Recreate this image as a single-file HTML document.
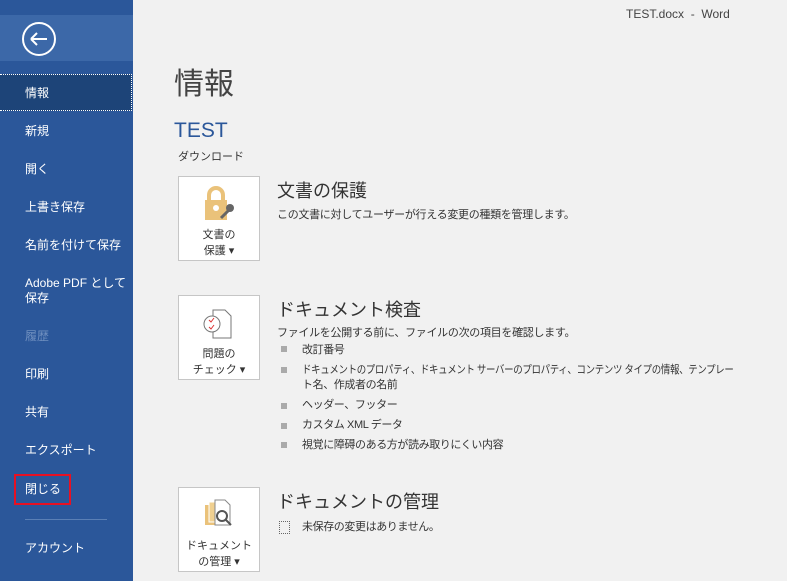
<!DOCTYPE html><html><head><meta charset="utf-8"><style>
body{margin:0;width:787px;height:581px;overflow:hidden;background:#f1f1f1;font-family:"Liberation Sans","Noto Sans CJK JP",sans-serif;position:relative}
.sb{position:absolute;left:0;top:0;width:133px;height:581px;background:#2b579a}
.band{position:absolute;left:0;top:15px;width:133px;height:46px;background:#3c68a8}
.it{position:absolute;left:25px;color:#fff;font-size:12px;line-height:15px}
.act{position:absolute;left:0;top:74px;width:132px;height:37px;background:#1d4478;border:1px dotted #fff;border-left:none;box-sizing:border-box}
.a{position:absolute;color:#444;font-size:12px}
.box{position:absolute;left:178px;width:82px;height:85px;border:1px solid #c6c6c6;background:#fff;box-sizing:border-box;text-align:center;font-size:11px;color:#333;line-height:16px}
.h{position:absolute;left:277px;font-size:18px;color:#333}
.t{position:absolute;left:277px;font-size:11px;color:#333;white-space:nowrap;letter-spacing:-0.3px}
.b{position:absolute;left:302px;font-size:11px;color:#333;line-height:15px;white-space:nowrap;letter-spacing:-0.4px}
.sq{position:absolute;left:281px;width:6px;height:6px;background:#aaa}
</style></head><body>
<div class="sb"></div><div class="band"></div>
<svg style="position:absolute;left:21px;top:21px" width="36" height="36"><circle cx="18" cy="18" r="16" fill="none" stroke="#fff" stroke-width="2"/><path d="M10 18H26M10 18L16 12M10 18L16 24" stroke="#fff" stroke-width="2" fill="none"/></svg>
<div class="act"></div>
<div class="it" style="top:86px">情報</div>
<div class="it" style="top:124px">新規</div>
<div class="it" style="top:162px">開く</div>
<div class="it" style="top:200px">上書き保存</div>
<div class="it" style="top:238px">名前を付けて保存</div>
<div class="it" style="top:276px">Adobe PDF として<br>保存</div>
<div class="it" style="top:329px;color:#6f8fbf">履歴</div>
<div class="it" style="top:367px">印刷</div>
<div class="it" style="top:405px">共有</div>
<div class="it" style="top:443px">エクスポート</div>
<div style="position:absolute;left:14px;top:474px;width:57px;height:31px;border:2px solid #e81123;box-sizing:border-box"></div>
<div class="it" style="top:482px">閉じる</div>
<div style="position:absolute;left:25px;top:519px;width:82px;height:1px;background:#5a7fb5"></div>
<div class="it" style="top:541px">アカウント</div>
<div class="a" style="left:626px;top:7px">TEST.docx &nbsp;- &nbsp;Word</div>
<div style="position:absolute;left:174px;top:59px;font-size:30px;color:#444">情報</div>
<div style="position:absolute;left:174px;top:119px;font-size:21px;color:#2b579a">TEST</div>
<div style="position:absolute;left:178px;top:148px;font-size:11px;color:#333">ダウンロード</div>
<div class="box" style="top:176px"><svg width="40" height="36" style="margin-top:9px"><rect x="6" y="14" width="22" height="20" fill="#eac27a"/><path d="M10 14V9a7 7 0 0114 0v5" fill="none" stroke="#eac27a" stroke-width="4"/><circle cx="17" cy="22" r="3" fill="#fff"/><path d="M22 32l8-8" stroke="#666" stroke-width="3"/><circle cx="31" cy="22" r="4" fill="#666"/></svg><div>文書の<br>保護 ▾</div></div>
<div class="h" style="top:177px">文書の保護</div>
<div class="t" style="top:206px">この文書に対してユーザーが行える変更の種類を管理します。</div>
<div class="box" style="top:295px"><svg width="40" height="36" style="margin-top:9px"><path d="M14 5h12l6 6v22H14z" fill="#fff" stroke="#777"/><circle cx="13" cy="19" r="8" fill="#fff" stroke="#777"/><path d="M10 15l2 2 3-4M10 22l2 2 3-4" stroke="#d33" fill="none"/></svg><div>問題の<br>チェック ▾</div></div>
<div class="h" style="top:296px">ドキュメント検査</div>
<div class="t" style="top:324px">ファイルを公開する前に、ファイルの次の項目を確認します。</div>
<div class="sq" style="top:346px"></div><div class="b" style="top:343px">改訂番号</div>
<div class="sq" style="top:367px"></div><div class="b" style="top:363px"><span style="display:inline-block;transform:scaleX(0.86);transform-origin:left">ドキュメントのプロパティ、ドキュメント サーバーのプロパティ、コンテンツ タイプの情報、テンプレー</span><br>ト名、作成者の名前</div>
<div class="sq" style="top:403px"></div><div class="b" style="top:398px">ヘッダー、フッター</div>
<div class="sq" style="top:423px"></div><div class="b" style="top:418px">カスタム XML データ</div>
<div class="sq" style="top:442px"></div><div class="b" style="top:438px">視覚に障碍のある方が読み取りにくい内容</div>
<div class="box" style="top:487px"><svg width="40" height="36" style="margin-top:9px"><rect x="6" y="8" width="14" height="20" fill="#eac27a"/><rect x="10" y="5" width="14" height="20" fill="#f0d090" stroke="#fff"/><path d="M16 3h10l5 5v20H16z" fill="#fff" stroke="#888"/><circle cx="23" cy="19" r="5" fill="none" stroke="#555" stroke-width="2"/><path d="M27 23l5 5" stroke="#555" stroke-width="2"/></svg><div>ドキュメント<br>の管理 ▾</div></div>
<div class="h" style="top:488px">ドキュメントの管理</div>
<div style="position:absolute;left:279px;top:521px;width:9px;height:11px;border:1px dotted #666"></div>
<div class="b" style="top:520px">未保存の変更はありません。</div>
</body></html>
